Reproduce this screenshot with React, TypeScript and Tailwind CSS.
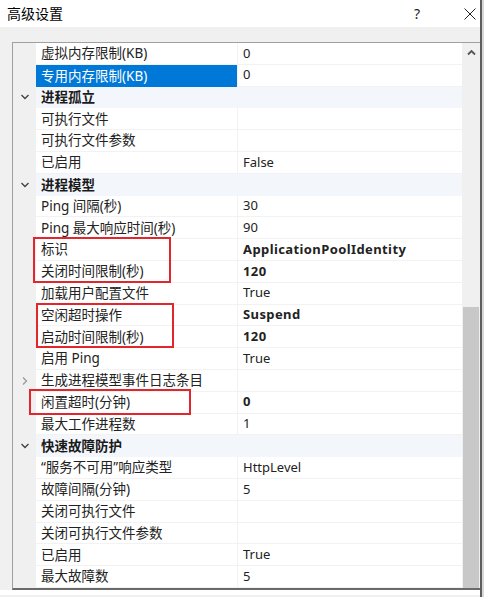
import React from 'react';

type Row = {
  name: string;
  value?: string;
  bold?: boolean;
  cat?: boolean;
  selected?: boolean;
  expandable?: boolean;
};

const rows: Row[] = [
  { name: '虚拟内存限制(KB)', value: '0' },
  { name: '专用内存限制(KB)', value: '0', selected: true },
  { name: '进程孤立', cat: true },
  { name: '可执行文件', value: '' },
  { name: '可执行文件参数', value: '' },
  { name: '已启用', value: 'False' },
  { name: '进程模型', cat: true },
  { name: 'Ping 间隔(秒)', value: '30' },
  { name: 'Ping 最大响应时间(秒)', value: '90' },
  { name: '标识', value: 'ApplicationPoolIdentity', bold: true },
  { name: '关闭时间限制(秒)', value: '120', bold: true },
  { name: '加载用户配置文件', value: 'True' },
  { name: '空闲超时操作', value: 'Suspend', bold: true },
  { name: '启动时间限制(秒)', value: '120', bold: true },
  { name: '启用 Ping', value: 'True' },
  { name: '生成进程模型事件日志条目', value: '', expandable: true },
  { name: '闲置超时(分钟)', value: '0', bold: true },
  { name: '最大工作进程数', value: '1' },
  { name: '快速故障防护', cat: true },
  { name: '“服务不可用”响应类型', value: 'HttpLevel' },
  { name: '故障间隔(分钟)', value: '5' },
  { name: '关闭可执行文件', value: '' },
  { name: '关闭可执行文件参数', value: '' },
  { name: '已启用', value: 'True' },
  { name: '最大故障数', value: '5' },
];

function Chevron({ open }: { open: boolean }) {
  return (
    <svg width="10" height="10" viewBox="0 0 10 10" className="text-[#404040]">
      {open ? (
        <path d="M1.5 3 L5 6.5 L8.5 3" fill="none" stroke="currentColor" strokeWidth="1.3" />
      ) : (
        <path d="M3 1.5 L6.5 5 L3 8.5" fill="none" stroke="#9a9a9a" strokeWidth="1.3" />
      )}
    </svg>
  );
}

function GridRow({ row }: { row: Row }) {
  if (row.cat) {
    return (
      <div className="flex h-[21.8px]">
        <div className="w-[23px] shrink-0 flex items-center justify-center bg-[#f0f0f0]">
          <Chevron open />
        </div>
        <div className="flex-1 flex items-center pl-[5px] bg-[#f3f6fb] font-bold text-[13.5px] text-[#1a1a1a]">
          {row.name}
        </div>
      </div>
    );
  }

  return (
    <div className="flex h-[21.8px]">
      <div className="w-[23px] shrink-0 flex items-center justify-center bg-[#f0f0f0]">
        {row.expandable && <Chevron open={false} />}
      </div>
      <div
        className={
          row.selected
            ? 'w-[201px] shrink-0 flex items-center pl-[5px] text-[13.5px] bg-[#0078d7] text-white'
            : 'w-[201px] shrink-0 flex items-center pl-[5px] text-[13.5px] border-b border-[#f2f2f2] text-[#222]'
        }
      >
        {row.name}
      </div>
      <div
        className={
          'flex-1 flex items-center pl-[5px] border-b border-l border-[#f2f2f2] text-[#222] ' +
          (row.bold ? 'font-bold tracking-[0.4px]' : '')
        }
      >
        {row.value}
      </div>
    </div>
  );
}

export default function App() {
  return (
    <div
      className="relative w-[484px] h-[597px] overflow-hidden flex bg-white text-[13px]"
      style={{ fontFamily: '"Noto Sans", "Noto Sans CJK SC", sans-serif' }}
    >
      <div className="w-[480px] flex flex-col">
        <div className="h-[27px] flex items-center justify-between pl-[7px] pr-[4px] bg-white">
          <span className="text-[14px] text-black">高级设置</span>
          <div className="flex items-center gap-[44px]">
            <span className="text-[14px] text-[#222]">?</span>
            <svg width="12" height="12" viewBox="0 0 12 12">
              <path d="M0.5 0.5 L11.5 11.5 M11.5 0.5 L0.5 11.5" stroke="#222" strokeWidth="1" />
            </svg>
          </div>
        </div>

        <div className="flex-1 bg-[#f0f0f0] pl-[12px] pt-[15px] flex flex-col">
          <div className="flex border-l border-t border-[#a0a0a0] border-b-[2px] border-b-[#6a6a6a]">
            <div className="flex-1 flex flex-col bg-white">
              {rows.map((row, i) => (
                <GridRow key={i} row={row} />
              ))}
            </div>
            <div className="w-[18px] shrink-0 bg-[#f0f0f0] flex flex-col">
              <div className="h-[18px] flex items-center justify-center">
                <svg width="9" height="7" viewBox="0 0 9 7">
                  <path d="M1 5.5 L4.5 2 L8 5.5" fill="none" stroke="#555" strokeWidth="1.8" />
                </svg>
              </div>
              <div className="h-[246px]" />
              <div className="flex-1 bg-[#c8c8c8] mx-[1px]" />
            </div>
          </div>
          <div className="h-[5px] bg-white -ml-[12px]" />
        </div>
      </div>
      <div className="w-[2px] bg-[#5e5e5e]" />
      <div className="w-[2px] bg-[#d8d8d8]" />

      <div className="absolute left-[33px] top-[237px] w-[138px] h-[46px] border-[2.5px] border-[#e3262c]" />
      <div className="absolute left-[36px] top-[303px] w-[138px] h-[45px] border-[2.5px] border-[#e3262c]" />
      <div className="absolute left-[29px] top-[389px] w-[162px] h-[26px] border-[2.5px] border-[#e3262c]" />
    </div>
  );
}
